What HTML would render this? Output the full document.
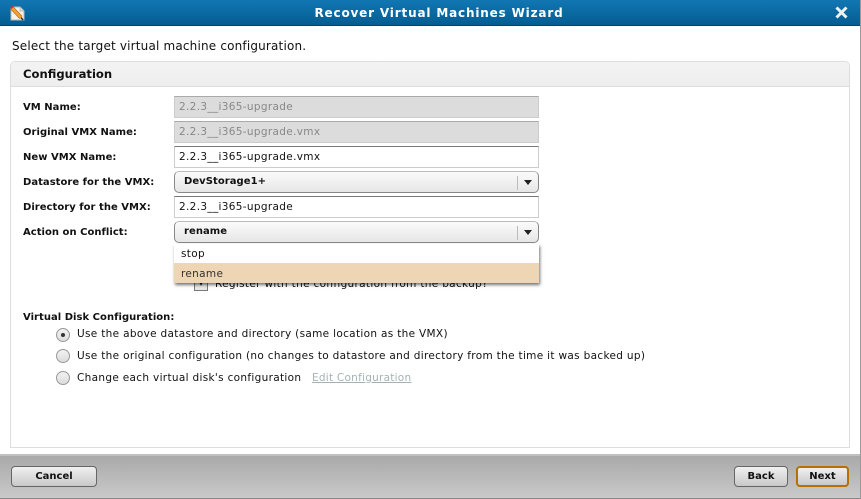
<!DOCTYPE html>
<html><head><meta charset="utf-8"><style>
*{box-sizing:border-box}
html,body{margin:0;padding:0}
body{width:861px;height:499px;position:relative;overflow:hidden;background:#fff;font-family:"DejaVu Sans",sans-serif;font-size:10.5px;color:#111}
.a{position:absolute;white-space:nowrap}
.t{letter-spacing:.32px;line-height:14px}
.lab{position:absolute;left:23px;font-weight:bold;font-size:10px;line-height:14px;white-space:nowrap;letter-spacing:.03px}
.inp{position:absolute;left:174px;width:365px;height:22px;border:1px solid #ccc;border-top-color:#777;font-size:10.5px;line-height:21px;padding-left:4px;background:#fff;letter-spacing:.33px}
.dis{background:#dcdcdc;color:#888;border-color:#ccc;border-top-color:#aaa}
.sel{position:absolute;left:174px;width:365px;height:22px;border:1px solid #888;border-top-color:#bbb;border-radius:5px;background:linear-gradient(#fbfbfb,#e6e6e6);font-weight:bold;font-size:10px;line-height:20px;padding-left:9px;letter-spacing:.05px}
.sel i{position:absolute;left:342px;top:4px;width:1px;height:14px;background:#bbb}
.sel b{position:absolute;left:349px;top:8px;width:0;height:0;border-left:4px solid transparent;border-right:4px solid transparent;border-top:5px solid #222}
.rad{position:absolute;left:56px;width:14px;height:14px;border-radius:50%;border:1px solid #999;background:linear-gradient(#f2f2f2,#dcdcdc)}
.btn{position:absolute;top:466px;height:21px;border:1px solid #666;border-radius:4px;background:linear-gradient(#f0f0f0,#c8c8c8);font-weight:bold;font-size:10px;text-align:center;line-height:19px;color:#111}
</style></head><body>
<div class="a" style="left:0;top:0;width:860px;height:26px;background:linear-gradient(#1177b3,#045d92);border-bottom:1px solid #04466e"></div>
<svg class="a" style="left:9px;top:4px" width="18" height="18" viewBox="0 0 18 18"><path d="M2 3h9l4 4v9H2z" fill="#f6f2e6" stroke="#b5b5b5"/><path d="M11 3v4h4" fill="#ddd" stroke="#aaa" stroke-width=".7"/><path d="M2.500 3.500l9.500 10" stroke="#a85a20" stroke-width="4"/><path d="M2.500 3.500l9.500 10" stroke="#f0a030" stroke-width="2.800"/><path d="M2 2.500l1.500 1.500" stroke="#c83030" stroke-width="3"/><path d="M12 13.500l2 2.500" stroke="#333" stroke-width="1.500"/></svg>
<div class="a" style="left:0;width:861px;top:6px;text-align:center;color:#fff;font-weight:bold;font-size:12px;line-height:15px;letter-spacing:.83px;padding-left:17px">Recover Virtual Machines Wizard</div>
<svg class="a" style="left:834px;top:5px" width="15" height="15" viewBox="0 0 15 15"><path d="M2.500 2.500l10 10M12.500 2.500l-10 10" stroke="#eef2f4" stroke-width="3"/></svg>
<div class="a" style="left:12px;top:38px;font-size:12px;line-height:16px;letter-spacing:.18px">Select the target virtual machine configuration.</div>
<div class="a" style="left:10px;top:61px;width:840px;height:387px;border:1px solid #ddd;border-radius:5px 5px 0 0"></div>
<div class="a" style="left:11px;top:62px;width:838px;height:25px;background:linear-gradient(#f3f3f3,#eee);border-bottom:1px solid #ddd;border-radius:4px 4px 0 0;font-weight:bold;font-size:11.6px;line-height:25px;padding-left:12px;color:#111">Configuration</div>
<div class="lab" style="top:101px">VM Name:</div>
<div class="lab" style="top:126px">Original VMX Name:</div>
<div class="lab" style="top:151px">New VMX Name:</div>
<div class="lab" style="top:176px">Datastore for the VMX:</div>
<div class="lab" style="top:201px">Directory for the VMX:</div>
<div class="lab" style="top:226px">Action on Conflict:</div>
<div class="inp dis" style="top:96px">2.2.3__i365-upgrade</div>
<div class="inp dis" style="top:121px">2.2.3__i365-upgrade.vmx</div>
<div class="inp" style="top:146px">2.2.3__i365-upgrade.vmx</div>
<div class="sel" style="top:171px">DevStorage1+<i></i><b></b></div>
<div class="inp" style="top:196px">2.2.3__i365-upgrade</div>
<div class="sel" style="top:221px">rename<i></i><b></b></div>
<div class="a" style="left:194px;top:277px;width:14px;height:14px;border:1px solid #777;background:#e8e8e8;text-align:center;font-size:9px;line-height:12px">▾</div>
<div class="a t" style="left:215px;top:277px">Register with the configuration from the backup?</div>
<div class="a" style="left:174px;top:244px;width:365px;height:39px;background:#fff;box-shadow:1px 2px 3px rgba(0,0,0,.55)">
<div class="t" style="height:19px;padding-left:7px;line-height:20px">stop</div>
<div class="t" style="height:20px;padding-left:7px;line-height:22px;background:#eed5b3;color:#333">rename</div></div>
<div class="lab" style="top:311px">Virtual Disk Configuration:</div>
<div class="rad" style="top:328px"><div style="position:absolute;left:4px;top:4px;width:4px;height:4px;border-radius:50%;background:#333"></div></div>
<div class="rad" style="top:349px"></div>
<div class="rad" style="top:371px"></div>
<div class="a t" style="left:77px;top:327px">Use the above datastore and directory (same location as the VMX)</div>
<div class="a t" style="left:77px;top:349px">Use the original configuration (no changes to datastore and directory from the time it was backed up)</div>
<div class="a t" style="left:77px;top:371px">Change each virtual disk's configuration</div>
<div class="a t" style="left:312px;top:371px;color:#a3b3b3;text-decoration:underline;letter-spacing:.25px">Edit Configuration</div>
<div class="a" style="left:0;top:454px;width:860px;height:45px;background:linear-gradient(#a9a9a9,#c9c9c9);border-top:2px solid #c0c0c0;border-bottom:1px solid #888"></div>
<div class="btn" style="left:11px;width:86px">Cancel</div>
<div class="btn" style="left:734px;width:54px">Back</div>
<div class="btn" style="left:796px;width:53px;border:2px solid #b86f00;line-height:17px">Next</div>
<div class="a" style="left:860px;top:0;width:1px;height:499px;background:#999"></div>
</body></html>
